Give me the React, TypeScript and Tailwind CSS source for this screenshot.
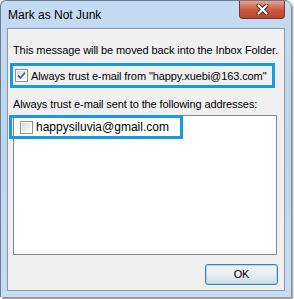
import { ReactNode } from 'react';

const font = { fontFamily: '"Segoe UI", "Liberation Sans", Arial, sans-serif' };

const CheckBox = ({ checked }: { checked?: boolean }) => (
  <span className="relative flex h-[13px] w-[13px] shrink-0 items-center justify-center border border-[#8e8f8f] bg-white">
    <span className="absolute inset-[1px] bg-gradient-to-br from-[#d6d8db] via-[#eeeeee] to-[#fbfbfb]" />
    {checked && (
      <svg className="relative" width="9" height="9" viewBox="0 0 9 9">
        <path d="M1 4.5 L3.5 7 L8 1.5" fill="none" stroke="#4a5f97" strokeWidth="1.8" />
      </svg>
    )}
  </span>
);

const Highlight = ({ children, className }: { children: ReactNode; className: string }) => (
  <div className={`flex items-center whitespace-nowrap border-[3px] border-[#1a9ad6] ${className}`}>{children}</div>
);

const App = () => {
  return (
    <div
      className="relative flex h-[299px] w-[294px] flex-col bg-white text-[11px] tracking-[-0.1px] text-black"
      style={font}
    >
      <div className="flex h-[297px] w-[291px] flex-col rounded-t-[6px] border-l border-t border-[#6d7b8a] bg-gradient-to-b from-[#c4dbf2] via-[#bcd5ef] to-[#c7ddf3] shadow-[2px_2px_2px_rgba(0,0,0,0.45)]">
        {/* title bar */}
        <div className="flex h-[27px] items-start justify-between">
          <span className="pl-[7px] pt-[6px] text-[12px] leading-[16px] tracking-normal">Mark as Not Junk</span>
          <button className="mr-[6px] flex h-[18px] w-[46px] items-center justify-center rounded-b-[4px] border border-t-0 border-[#6b3b33] bg-gradient-to-b from-[#e8a493] via-[#c95b44] to-[#c4432c]">
            <svg width="13" height="11" viewBox="0 0 13 11">
              <path d="M2.5 1.5 L10.5 9.5 M10.5 1.5 L2.5 9.5" stroke="#4a2a22" strokeWidth="4" strokeLinecap="round" />
              <path d="M2.5 1.5 L10.5 9.5 M10.5 1.5 L2.5 9.5" stroke="#ffffff" strokeWidth="2.2" strokeLinecap="round" />
            </svg>
          </button>
        </div>

        {/* client area */}
        <div className="mx-[6px] flex h-[263px] flex-col border border-[#8d98a4] bg-[#f0f0f0]">
          <p className="whitespace-nowrap pl-[5px] pt-[13px] leading-[16px]">
            This message will be moved back into the Inbox Folder.
          </p>

          <Highlight className="ml-[2px] mt-[5px] h-[25px] w-[265px] gap-[3px] pl-[2px]">
            <CheckBox checked />
            <span className="leading-[16px]">Always trust e-mail from "happy.xuebi@163.com"</span>
          </Highlight>

          <p className="whitespace-nowrap pl-[5px] pt-[8px] leading-[16px]">
            Always trust e-mail sent to the following addresses:
          </p>

          <div className="relative ml-[5px] mt-[3px] h-[140px] w-[264px] border border-[#828790] bg-white">
            <Highlight className="absolute left-[-5px] top-[-1px] h-[24px] w-[174px] gap-[3px] pl-[8px]">
              <CheckBox />
              <span className="text-[12px] leading-[16px] tracking-normal">happysiluvia@gmail.com</span>
            </Highlight>
          </div>

          <div className="flex justify-end pr-[6px] pt-[9px]">
            <button className="h-[21px] w-[73px] rounded-[3px] border border-[#3c7fb1] bg-gradient-to-b from-[#f2f2f2] via-[#e7eef3] to-[#cfdce6] text-[11px] leading-none shadow-[inset_0_0_0_1px_#a9dbf6]">
              OK
            </button>
          </div>
        </div>
      </div>
    </div>
  );
};

export default App;
